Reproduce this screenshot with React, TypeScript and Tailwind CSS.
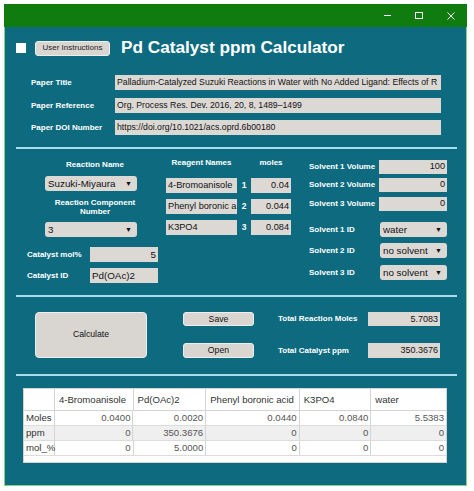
import React from "react";

const F = { fontFamily: '"Liberation Sans", Arial, sans-serif' };

function Field({ w, h = 15, text, right, fs = 8.7, className = "" }: { w: number; h?: number; text: string; right?: boolean; fs?: number; className?: string }) {
  return (
    <div
      className={`bg-[#dcd9d5] text-[#111] leading-none flex items-center overflow-hidden whitespace-nowrap px-[2px] ${right ? "justify-end" : "justify-start"} ${className}`}
      style={{ width: w, height: h, fontSize: fs }}
    >
      <span className="shrink-0">{text}</span>
    </div>
  );
}

function Drop({ w, h = 15, text, className = "" }: { w: number; h?: number; text: string; className?: string }) {
  return (
    <div
      className={`bg-[#dcd9d5] rounded-[3px] text-[#111] text-[9.8px] leading-none flex items-center justify-between pl-[3px] pr-[5px] whitespace-nowrap ${className}`}
      style={{ width: w, height: h }}
    >
      <span>{text}</span>
      <span className="text-[7px]">▼</span>
    </div>
  );
}

function Label({ children, w }: { children: React.ReactNode; w: number }) {
  return (
    <div className="text-white font-bold text-[8px] leading-none whitespace-nowrap" style={{ width: w }}>
      {children}
    </div>
  );
}

function Divider({ className = "" }: { className?: string }) {
  return <div className={`ml-[11px] w-[441px] h-[2px] bg-[#a9dcef] ${className}`} />;
}

export default function App() {
  const cols = [
    { w: 31, h: "" },
    { w: 79, h: "4-Bromoanisole" },
    { w: 73, h: "Pd(OAc)2" },
    { w: 94, h: "Phenyl boronic acid" },
    { w: 72, h: "K3PO4" },
    { w: 75, h: "water" },
  ];
  const rows = [
    ["Moles", "0.0400", "0.0020", "0.0440", "0.0840", "5.5383"],
    ["ppm", "0", "350.3676", "0", "0", "0"],
    ["mol_%", "0", "5.0000", "0", "0", "0"],
  ];
  return (
    <div className="w-[474px] h-[491px] bg-white pt-[4px] pl-[4px]" style={F}>
      <div className="w-[463px] h-[482px] bg-[#0e6b7f] border-x border-b border-[#86d186] flex flex-col">
        {/* title bar */}
        <div className="h-[23px] bg-[#107c10] flex justify-end items-center -mx-px">
          <div className="w-[32px] h-[23px] flex items-center justify-center">
            <div className="w-[7px] h-px bg-white" />
          </div>
          <div className="w-[32px] h-[23px] flex items-center justify-center">
            <div className="w-[8px] h-[7px] border border-white" />
          </div>
          <div className="w-[32px] h-[23px] flex items-center justify-center">
            <svg width="8" height="8" viewBox="0 0 8 8">
              <path d="M0.5 0.5 L7.5 7.5 M7.5 0.5 L0.5 7.5" stroke="white" strokeWidth="1" />
            </svg>
          </div>
        </div>

        {/* header */}
        <div className="mt-[13px] h-[16px] flex items-center pl-[11px]">
          <div className="w-[10px] h-[10px] bg-white" />
          <div className="ml-[9px] w-[75px] h-[15px] bg-[#d9d6d2] border border-[#eeeeee] rounded-[3px] text-[8px] text-[#222] flex items-center justify-center leading-none whitespace-nowrap">
            User Instructions
          </div>
          <div className="ml-[11px] text-white font-bold text-[17.2px] leading-none whitespace-nowrap">Pd Catalyst ppm Calculator</div>
        </div>

        {/* paper */}
        <div className="mt-[19px] flex items-center pl-[26px]">
          <Label w={84}>Paper Title</Label>
          <Field w={326} text="Palladium-Catalyzed Suzuki Reactions in Water with No Added Ligand: Effects of R" />
        </div>
        <div className="mt-[8px] flex items-center pl-[26px]">
          <Label w={84}>Paper Reference</Label>
          <Field w={326} text="Org. Process Res. Dev. 2016, 20, 8, 1489–1499" />
        </div>
        <div className="mt-[7px] flex items-center pl-[26px]">
          <Label w={84}>Paper DOI Number</Label>
          <Field w={326} text="https://doi.org/10.1021/acs.oprd.6b00180" />
        </div>
        <Divider className="mt-[12px]" />

        {/* middle */}
        <div className="h-[146px] flex pl-[22px]">
          {/* col1 */}
          <div className="w-[136px] flex flex-col">
            <div className="mt-[11px] h-[10px] text-center text-white font-bold text-[8px] leading-[10px]">Reaction Name</div>
            <Drop w={92} text="Suzuki-Miyaura" className="mt-[6px] ml-[18px]" />
            <div className="mt-[7px] text-center text-white font-bold text-[8px] leading-[9px]">
              Reaction Component
              <br />
              Number
            </div>
            <Drop w={92} text="3" className="mt-[6px] ml-[18px]" />
            <div className="mt-[10px] flex items-center">
              <Label w={63}>Catalyst mol%</Label>
              <Field w={68} text="5" right fs={9.8} />
            </div>
            <div className="mt-[6px] flex items-center">
              <Label w={63}>Catalyst ID</Label>
              <Field w={68} text="Pd(OAc)2" fs={9.8} />
            </div>
          </div>
          {/* col2 */}
          <div className="ml-[3px] w-[125px] flex flex-col">
            <div className="mt-[9px] h-[10px] flex text-white font-bold text-[8px] leading-[10px]">
              <div className="w-[71px] text-center">Reagent Names</div>
              <div className="w-[14px]" />
              <div className="w-[40px] text-center">moles</div>
            </div>
            {[
              ["4-Bromoanisole", "1", "0.04"],
              ["Phenyl boronic a", "2", "0.044"],
              ["K3PO4", "3", "0.084"],
            ].map((r, i) => (
              <div key={i} className={`flex items-center ${i === 0 ? "mt-[10px]" : "mt-[6px]"}`}>
                <Field w={71} text={r[0]} fs={9.2} />
                <div className="w-[14px] text-center text-white font-bold text-[8.5px] leading-none">{r[1]}</div>
                <Field w={40} text={r[2]} right fs={9.2} />
              </div>
            ))}
          </div>
          {/* col3 */}
          <div className="ml-[18px] w-[138px] flex flex-col">
            <div className="mt-[11px] flex items-center">
              <Label w={70}>Solvent 1 Volume</Label>
              <Field w={68} h={14} text="100" right fs={9.2} />
            </div>
            <div className="mt-[4px] flex items-center">
              <Label w={70}>Solvent 2 Volume</Label>
              <Field w={68} h={14} text="0" right fs={9.2} />
            </div>
            <div className="mt-[5px] flex items-center">
              <Label w={70}>Solvent 3 Volume</Label>
              <Field w={68} h={14} text="0" right fs={9.2} />
            </div>
            <div className="mt-[11px] flex items-center">
              <Label w={71}>Solvent 1 ID</Label>
              <Drop w={67} text="water" />
            </div>
            <div className="mt-[6px] flex items-center">
              <Label w={71}>Solvent 2 ID</Label>
              <Drop w={67} text="no solvent" />
            </div>
            <div className="mt-[7px] flex items-center">
              <Label w={71}>Solvent 3 ID</Label>
              <Drop w={67} text="no solvent" />
            </div>
          </div>
        </div>
        <Divider />

        {/* bottom */}
        <div className="h-[77px] flex pl-[30px]">
          <div className="mt-[15px] w-[112px] h-[46px] bg-[#d9d6d2] border border-[#eeeeee] rounded-[4px] text-[8.7px] text-[#111] flex items-center justify-center">
            Calculate
          </div>
          <div className="ml-[36px] w-[71px] mt-[15px] flex flex-col">
            <div className="h-[14px] bg-[#d9d6d2] border border-[#eeeeee] rounded-[3px] text-[8.7px] text-[#111] flex items-center justify-center leading-none">Save</div>
            <div className="mt-[17px] h-[15px] bg-[#d9d6d2] border border-[#eeeeee] rounded-[3px] text-[8.7px] text-[#111] flex items-center justify-center leading-none">Open</div>
          </div>
          <div className="ml-[24px] mt-[15px] flex flex-col">
            <div className="flex items-center">
              <Label w={90}>Total Reaction Moles</Label>
              <Field w={72} h={14} text="5.7083" right fs={9} />
            </div>
            <div className="mt-[17px] flex items-center">
              <Label w={90}>Total Catalyst ppm</Label>
              <Field w={72} text="350.3676" right fs={9} />
            </div>
          </div>
        </div>
        <Divider />

        {/* table */}
        <div className="mt-[12px] ml-[18px] w-[424px] h-[75px] bg-white border border-[#d4d4d4] flex flex-col">
          <div className="flex h-[22px] border-b border-[#d4d4d4]">
            {cols.map((c, i) => (
              <div
                key={i}
                className={`h-full flex items-center pl-[4px] text-[9.6px] text-[#333] leading-none whitespace-nowrap ${i < cols.length - 1 ? "border-r border-[#d4d4d4]" : ""}`}
                style={{ width: c.w }}
              >
                {c.h}
              </div>
            ))}
          </div>
          {rows.map((r, ri) => (
            <div key={ri} className={`flex h-[15px] border-b border-[#dcdcdc] ${ri === 1 ? "bg-[#efefef]" : "bg-white"}`}>
              {r.map((v, ci) => (
                <div
                  key={ci}
                  className={`h-full flex items-center text-[9.6px] leading-none whitespace-nowrap ${ci === 0 ? "justify-start pl-[2px] text-[#333]" : "justify-end pr-[2px] text-[#555]"} ${ci < r.length - 1 ? "border-r border-[#d4d4d4]" : ""}`}
                  style={{ width: cols[ci].w }}
                >
                  {v}
                </div>
              ))}
            </div>
          ))}
        </div>
      </div>
    </div>
  );
}
